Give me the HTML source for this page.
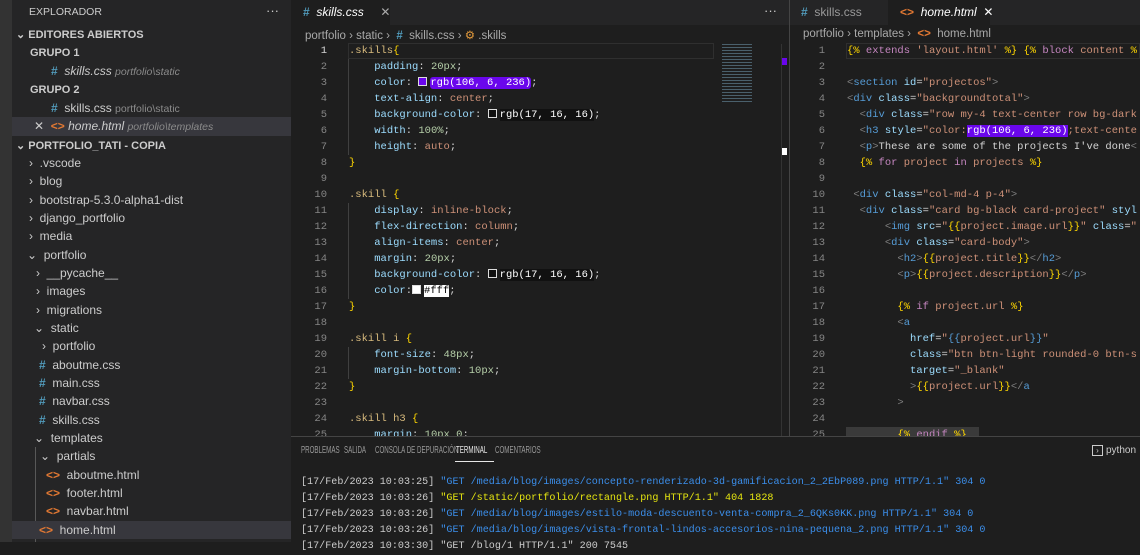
<!DOCTYPE html>
<html><head><meta charset="utf-8"><style>
*{margin:0;padding:0;box-sizing:border-box}
body{width:1140px;height:542px;background:#1e1e1e;overflow:hidden;position:relative;font-family:"Liberation Sans",sans-serif;color:#ccc}
.a{position:absolute;white-space:pre}
#act{left:0;top:0;width:12px;height:542px;background:#333}
#side{left:12px;top:0;width:279px;height:542px;background:#252526}
.si{position:absolute;font-size:12px;color:#ccc;white-space:pre;line-height:18px}
.hd{font-size:11px;font-weight:bold;color:#ccc}
.hash{color:#519aba;font-weight:bold}
.ang{color:#e37933;font-weight:bold}
.dim{color:#8b8b8b;font-size:10.5px;font-style:italic}
.code{font-family:"Liberation Mono",monospace;font-size:10.5px;line-height:16px}
.ln{position:absolute;white-space:pre;text-align:right;color:#858585;font-family:"Liberation Mono",monospace;font-size:10.5px;line-height:16px}
.p{color:#9cdcfe}.n{color:#b5cea8}.v{color:#ce9178}.s{color:#d7ba7d}.b{color:#ffd700}.w{color:#d4d4d4}.t{color:#569cd6}.g{color:#808080}.k{color:#c586c0}.y{color:#ffd700}
.sw{display:inline-block;width:9px;height:9px;border:1px solid #ddd;margin-right:3px;vertical-align:-1px}
.pt{position:absolute;top:445px;font-size:10px;color:#999;white-space:pre;transform:scaleX(0.62);transform-origin:0 0}
</style></head><body>
<div class="a" id="act"></div>
<div class="a" id="side"></div>
<div class="si" style="left:29px;top:3px;font-size:10.5px">EXPLORADOR</div>
<div class="si" style="left:266px;top:2px;font-size:13px">···</div>
<div class="si hd" style="left:16px;top:26px">⌄ EDITORES ABIERTOS</div>
<div class="si hd" style="left:30px;top:44px">GRUPO 1</div>
<div class="si" style="left:51px;top:62px"><span class="hash">#</span>  <i>skills.css</i> <span class="dim">portfolio\static</span></div>
<div class="si hd" style="left:30px;top:81px">GRUPO 2</div>
<div class="si" style="left:51px;top:99px"><span class="hash">#</span>  skills.css <span class="dim" style="font-style:normal">portfolio\static</span></div>
<div class="a" style="left:12px;top:117px;width:279px;height:19px;background:#37373d"></div>
<div class="si" style="left:34px;top:117px">✕  <span class="ang">&lt;&gt;</span> <i>home.html</i> <span class="dim">portfolio\templates</span></div>
<div class="si hd" style="left:16px;top:137px">⌄ PORTFOLIO_TATI - COPIA</div>
<div class="si" style="left:29px;top:154px">›  .vscode</div>
<div class="si" style="left:29px;top:172px">›  blog</div>
<div class="si" style="left:29px;top:191px">›  bootstrap-5.3.0-alpha1-dist</div>
<div class="si" style="left:29px;top:209px">›  django_portfolio</div>
<div class="si" style="left:29px;top:227px">›  media</div>
<div class="si" style="left:27px;top:246px">⌄  portfolio</div>
<div class="si" style="left:36px;top:264px">›  __pycache__</div>
<div class="si" style="left:36px;top:282px">›  images</div>
<div class="si" style="left:36px;top:301px">›  migrations</div>
<div class="si" style="left:34px;top:319px">⌄  static</div>
<div class="si" style="left:42px;top:337px">›  portfolio</div>
<div class="si" style="left:39px;top:356px"><span class="hash">#</span>  aboutme.css</div>
<div class="si" style="left:39px;top:374px"><span class="hash">#</span>  main.css</div>
<div class="si" style="left:39px;top:392px"><span class="hash">#</span>  navbar.css</div>
<div class="si" style="left:39px;top:411px"><span class="hash">#</span>  skills.css</div>
<div class="si" style="left:34px;top:429px">⌄  templates</div>
<div class="a" style="left:35px;top:447px;width:1px;height:95px;background:#585858"></div>
<div class="si" style="left:40px;top:447px">⌄  partials</div>
<div class="si" style="left:46px;top:466px"><span class="ang">&lt;&gt;</span>  aboutme.html</div>
<div class="si" style="left:46px;top:484px"><span class="ang">&lt;&gt;</span>  footer.html</div>
<div class="si" style="left:46px;top:502px"><span class="ang">&lt;&gt;</span>  navbar.html</div>
<div class="a" style="left:12px;top:521px;width:279px;height:18px;background:#37373d"></div>
<div class="si" style="left:39px;top:521px"><span class="ang">&lt;&gt;</span>  home.html</div>

<!-- tab bars -->
<div class="a" style="left:291px;top:0;width:498px;height:25px;background:#252526"></div>
<div class="a" style="left:291px;top:0;width:99px;height:25px;background:#1e1e1e;font-size:12px;line-height:25px;padding-left:12px;color:#fff"><span class="hash">#</span>  <i>skills.css</i>     <span style="color:#aaa">✕</span></div>
<div class="a" style="left:764px;top:3px;font-size:13px;color:#ccc">···</div>
<div class="a" style="left:789px;top:0;width:351px;height:25px;background:#252526;border-left:1px solid #444"></div>
<div class="a" style="left:801px;top:0;font-size:12px;line-height:25px;color:#999"><span class="hash">#</span>  skills.css</div>
<div class="a" style="left:888px;top:0;width:102px;height:25px;background:#1e1e1e;font-size:12px;line-height:25px;padding-left:12px;color:#fff"><span class="ang">&lt;&gt;</span>  <i>home.html</i>  ✕</div>
<div class="a" style="left:789px;top:25px;width:1px;height:411px;background:#444"></div>

<!-- breadcrumbs -->
<div class="a" style="left:305px;top:28px;font-size:11.5px;color:#a9a9a9">portfolio › static ›  <span class="hash">#</span>  skills.css › <span style="color:#e39a3c">⚙</span> .skills</div>
<div class="a" style="left:803px;top:28px;font-size:11.5px;color:#a9a9a9">portfolio › templates ›  <span class="ang">&lt;&gt;</span>  home.html</div>

<!-- left editor -->
<div class="a" style="left:348px;top:43px;width:366px;height:16px;border:1px solid #2f2f2f"></div>
<div class="ln" style="left:300px;top:43px;width:27px">1
2
3
4
5
6
7
8
9
10
11
12
13
14
15
16
17
18
19
20
21
22
23
24
25</div>
<div class="ln" style="left:300px;top:43px;width:27px;color:#c6c6c6">1</div>
<div class="a code w" style="left:349px;top:43px"><span class="s">.skills</span><span class="b">{</span>
    <span class="p">padding</span>: <span class="n">20px</span>;
    <span class="p">color</span>: <span class="sw" style="background:#6a06ec"></span><span style="background:#6a06ec;color:#fff;border-radius:3px">rgb(106, 6, 236)</span>;
    <span class="p">text-align</span>: <span class="v">center</span>;
    <span class="p">background-color</span>: <span class="sw" style="background:#111"></span><span style="background:#111;color:#fff">rgb(17, 16, 16)</span>;
    <span class="p">width</span>: <span class="n">100%</span>;
    <span class="p">height</span>: <span class="v">auto</span>;
<span class="b">}</span>

<span class="s">.skill</span> <span class="b">{</span>
    <span class="p">display</span>: <span class="v">inline-block</span>;
    <span class="p">flex-direction</span>: <span class="v">column</span>;
    <span class="p">align-items</span>: <span class="v">center</span>;
    <span class="p">margin</span>: <span class="n">20px</span>;
    <span class="p">background-color</span>: <span class="sw" style="background:#111"></span><span style="background:#111;color:#fff">rgb(17, 16, 16)</span>;
    <span class="p">color</span>:<span class="sw" style="background:#fff"></span><span style="background:#fff;color:#000">#fff</span>;
<span class="b">}</span>

<span class="s">.skill i</span> <span class="b">{</span>
    <span class="p">font-size</span>: <span class="n">48px</span>;
    <span class="p">margin-bottom</span>: <span class="n">10px</span>;
<span class="b">}</span>

<span class="s">.skill h3</span> <span class="b">{</span>
    <span class="p">margin</span>: <span class="n">10px 0</span>;</div>
<div class="a" style="left:348px;top:59px;width:1px;height:96px;background:#404040"></div>
<div class="a" style="left:348px;top:203px;width:1px;height:96px;background:#404040"></div>
<div class="a" style="left:348px;top:347px;width:1px;height:32px;background:#404040"></div>
<div class="a" style="left:722px;top:44px;width:30px;height:60px;opacity:.35;background:repeating-linear-gradient(#9cdcfe 0 1px,transparent 1px 3px)"></div>
<div class="a" style="left:781px;top:44px;width:8px;height:392px;border-left:1px solid #333"></div>
<div class="a" style="left:782px;top:58px;width:5px;height:7px;background:#6a06ec"></div>
<div class="a" style="left:782px;top:148px;width:5px;height:7px;background:#fff"></div>

<!-- right editor -->
<div class="a" style="left:846px;top:43px;width:294px;height:16px;border:1px solid #2f2f2f"></div>
<div class="ln" style="left:798px;top:43px;width:27px">1
2
3
4
5
6
7
8
9
10
11
12
13
14
15
16
17
18
19
20
21
22
23
24
25</div>
<div class="a" style="left:846px;top:427px;width:133px;height:9px;background:#3a3a3a"></div>
<div class="a code w" style="left:847px;top:43px"><span class="y">{%</span> <span class="k">extends</span> <span class="v">'layout.html'</span> <span class="y">%}</span> <span class="y">{%</span> <span class="k">block</span> <span class="v">content</span> <span class="y">%</span>

<span class="g">&lt;</span><span class="t">section</span> <span class="p">id</span>=<span class="v">"projectos"</span><span class="g">&gt;</span>
<span class="g">&lt;</span><span class="t">div</span> <span class="p">class</span>=<span class="v">"backgroundtotal"</span><span class="g">&gt;</span>
  <span class="g">&lt;</span><span class="t">div</span> <span class="p">class</span>=<span class="v">"row my-4 text-center row bg-dark</span>
  <span class="g">&lt;</span><span class="t">h3</span> <span class="p">style</span>=<span class="v">"color:</span><span style="background:#6a06ec;color:#fff">rgb(106, 6, 236)</span><span class="v">;text-cente</span>
  <span class="g">&lt;</span><span class="t">p</span><span class="g">&gt;</span>These are some of the projects I've done<span class="g">&lt;</span>
  <span class="y">{%</span> <span class="k">for</span> <span class="v">project</span> <span class="k">in</span> <span class="v">projects</span> <span class="y">%}</span>

 <span class="g">&lt;</span><span class="t">div</span> <span class="p">class</span>=<span class="v">"col-md-4 p-4"</span><span class="g">&gt;</span>
  <span class="g">&lt;</span><span class="t">div</span> <span class="p">class</span>=<span class="v">"card bg-black card-project"</span> <span class="p">styl</span>
      <span class="g">&lt;</span><span class="t">img</span> <span class="p">src</span>=<span class="v">"</span><span class="y">{{</span><span class="v">project.image.url</span><span class="y">}}</span><span class="v">"</span> <span class="p">class</span>=<span class="v">"</span>
      <span class="g">&lt;</span><span class="t">div</span> <span class="p">class</span>=<span class="v">"card-body"</span><span class="g">&gt;</span>
        <span class="g">&lt;</span><span class="t">h2</span><span class="g">&gt;</span><span class="y">{{</span><span class="v">project.title</span><span class="y">}}</span><span class="g">&lt;/</span><span class="t">h2</span><span class="g">&gt;</span>
        <span class="g">&lt;</span><span class="t">p</span><span class="g">&gt;</span><span class="y">{{</span><span class="v">project.description</span><span class="y">}}</span><span class="g">&lt;/</span><span class="t">p</span><span class="g">&gt;</span>

        <span class="y">{%</span> <span class="k">if</span> <span class="v">project.url</span> <span class="y">%}</span>
        <span class="g">&lt;</span><span class="t">a</span>
          <span class="p">href</span>=<span class="v">"</span><span class="t">{{</span><span class="v">project.url</span><span class="t">}}</span><span class="v">"</span>
          <span class="p">class</span>=<span class="v">"btn btn-light rounded-0 btn-s</span>
          <span class="p">target</span>=<span class="v">"_blank"</span>
          <span class="g">&gt;</span><span class="y">{{</span><span class="v">project.url</span><span class="y">}}</span><span class="g">&lt;/</span><span class="t">a</span>
        <span class="g">&gt;</span>

        <span class="y">{%</span> <span class="k">endif</span> <span class="y">%}</span></div>

<!-- panel -->
<div class="a" style="left:291px;top:436px;width:849px;height:106px;background:#1e1e1e;border-top:1px solid #444"></div>
<div class="pt" style="left:301px">PROBLEMAS</div>
<div class="pt" style="left:344px">SALIDA</div>
<div class="pt" style="left:375px">CONSOLA DE DEPURACIÓN</div>
<div class="pt" style="left:456px;color:#e7e7e7">TERMINAL</div>
<div class="a" style="left:455px;top:461px;width:39px;height:1px;background:#e7e7e7"></div>
<div class="pt" style="left:495px">COMENTARIOS</div>
<div class="a" style="left:1092px;top:445px;width:11px;height:11px;border:1px solid #ccc;font-size:8px;line-height:9px;text-align:center;color:#ccc">›</div>
<div class="a" style="left:1106px;top:445px;font-size:10px;color:#ccc">python</div>
<div class="a" style="left:301px;top:475px;font-family:'Liberation Mono',monospace;font-size:10.1px;line-height:16px;color:#ccc">[17/Feb/2023 10:03:25] <span style="color:#3b8eea">"GET /media/blog/images/concepto-renderizado-3d-gamificacion_2_2EbP089.png HTTP/1.1" 304 0</span>
[17/Feb/2023 10:03:26] <span style="color:#e5e510">"GET /static/portfolio/rectangle.png HTTP/1.1" 404 1828</span>
[17/Feb/2023 10:03:26] <span style="color:#3b8eea">"GET /media/blog/images/estilo-moda-descuento-venta-compra_2_6QKs0KK.png HTTP/1.1" 304 0</span>
[17/Feb/2023 10:03:26] <span style="color:#3b8eea">"GET /media/blog/images/vista-frontal-lindos-accesorios-nina-pequena_2.png HTTP/1.1" 304 0</span>
[17/Feb/2023 10:03:30] "GET /blog/1 HTTP/1.1" 200 7545</div>
</body></html>
